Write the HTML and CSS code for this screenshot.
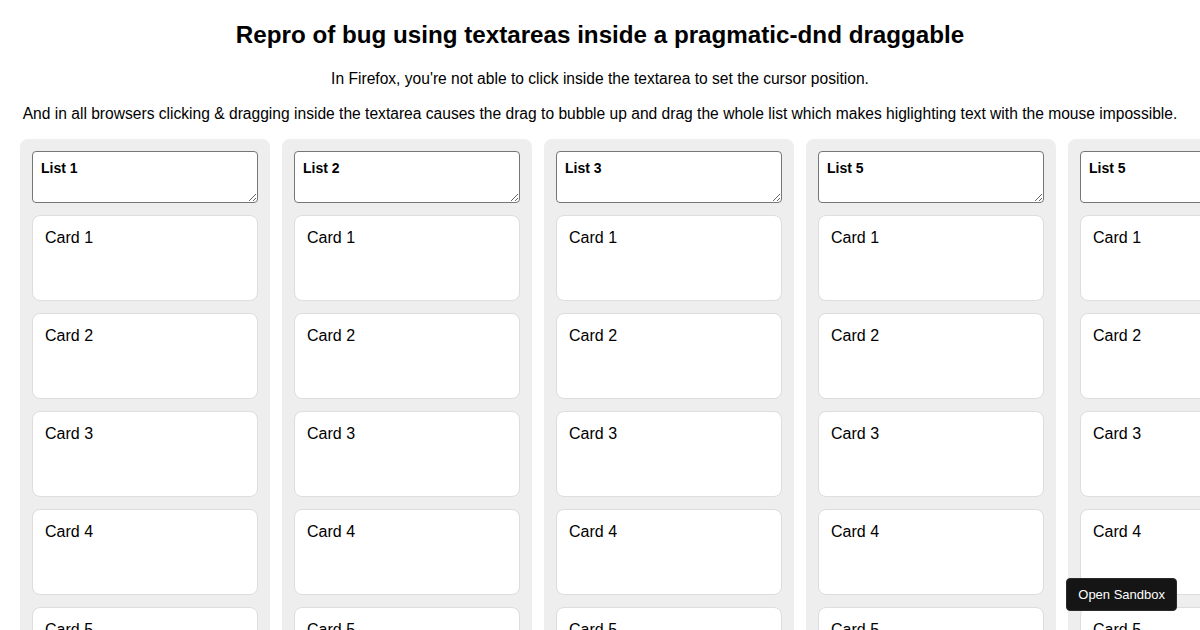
FILE: index.html
```html
<!DOCTYPE html>
<html>
<head>
<meta charset="utf-8">
<link rel="stylesheet" href="styles.css">
</head>
<body>
<h1 class="title">Repro of bug using textareas inside a pragmatic-dnd draggable</h1>
<p class="note">In Firefox, you're not able to click inside the textarea to set the cursor position.</p>
<p class="note note-last">And in all browsers clicking &amp; dragging inside the textarea causes the drag to bubble up and drag the whole list which makes higlighting text with the mouse impossible.</p>
<div class="board">
  <div class="list">
    <textarea class="list-title">List 1</textarea>
    <div class="card">Card 1</div><div class="card">Card 2</div><div class="card">Card 3</div><div class="card">Card 4</div><div class="card">Card 5</div>
  </div>
  <div class="list">
    <textarea class="list-title">List 2</textarea>
    <div class="card">Card 1</div><div class="card">Card 2</div><div class="card">Card 3</div><div class="card">Card 4</div><div class="card">Card 5</div>
  </div>
  <div class="list">
    <textarea class="list-title">List 3</textarea>
    <div class="card">Card 1</div><div class="card">Card 2</div><div class="card">Card 3</div><div class="card">Card 4</div><div class="card">Card 5</div>
  </div>
  <div class="list">
    <textarea class="list-title">List 5</textarea>
    <div class="card">Card 1</div><div class="card">Card 2</div><div class="card">Card 3</div><div class="card">Card 4</div><div class="card">Card 5</div>
  </div>
  <div class="list">
    <textarea class="list-title">List 5</textarea>
    <div class="card">Card 1</div><div class="card">Card 2</div><div class="card">Card 3</div><div class="card">Card 4</div><div class="card">Card 5</div>
  </div>
</div>
<a class="sandbox-btn">Open Sandbox</a>
</body>
</html>
```
FILE: styles.css
```css
html, body {
  margin: 0;
  overflow: hidden;
}
body {
  padding: 21px 20px 0;
  font-family: "Liberation Sans", Arial, sans-serif;
  color: #000;
  background: #fff;
}
.title {
  margin: 0 0 21px;
  font-size: 24.2px;
  line-height: 28px;
  font-weight: bold;
  text-align: center;
}
.note {
  margin: 0 0 17px;
  font-size: 15.6px;
  line-height: 18px;
  text-align: center;
  white-space: nowrap;
}
.note-last {
  margin-bottom: 16px;
}
.board {
  display: flex;
  gap: 12px;
}
.list {
  flex: 0 0 250px;
  box-sizing: border-box;
  background: #eeeeee;
  border-radius: 8px;
  padding: 12px;
  display: flex;
  flex-direction: column;
  gap: 12px;
}
.list-title {
  display: block;
  box-sizing: border-box;
  width: 100%;
  height: 52px;
  margin: 0;
  padding: 8px 8px;
  font-family: "Liberation Sans", Arial, sans-serif;
  font-size: 14px;
  line-height: 16px;
  font-weight: bold;
  color: #000;
  background: #fff;
  border: 1px solid #767676;
  border-radius: 4px;
}
.card {
  box-sizing: border-box;
  height: 86px;
  background: #fff;
  border: 1px solid #dddddd;
  border-radius: 8px;
  padding: 13px 12px 12px;
  font-size: 16px;
  line-height: 18px;
}
.sandbox-btn {
  position: fixed;
  right: 23px;
  bottom: 19px;
  box-sizing: border-box;
  height: 33px;
  padding: 0 11px;
  display: flex;
  align-items: center;
  background: #151515;
  color: #fff;
  font-size: 13px;
  border-radius: 4px;
  border: 1px solid #2a2a2a;
}
```
